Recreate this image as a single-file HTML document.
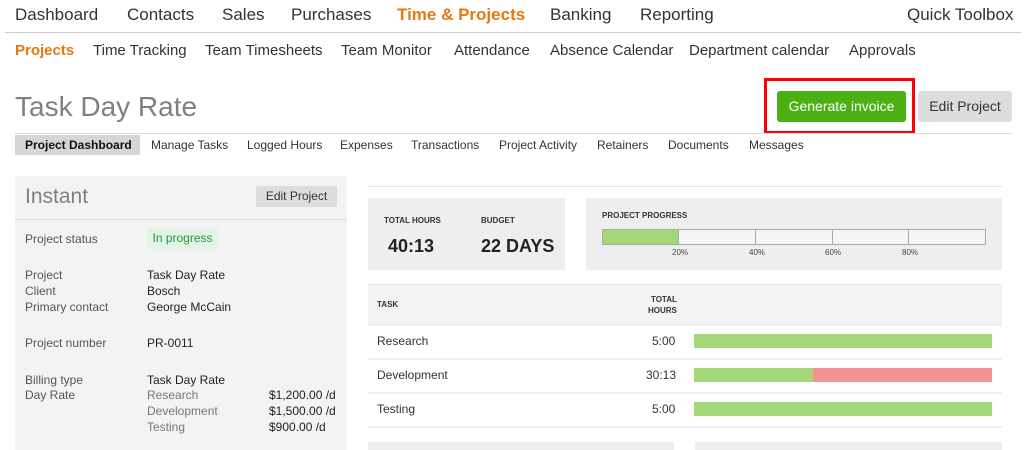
<!DOCTYPE html>
<html><head><meta charset="utf-8"><style>
*{margin:0;padding:0;box-sizing:border-box}
body{width:1024px;height:450px;overflow:hidden;background:#fff;font-family:"Liberation Sans",sans-serif;color:#333;position:relative}
.a{position:absolute;white-space:nowrap}
.n{font-size:17px;top:5px;color:#333}
.s{font-size:15px;top:42px;color:#333}
.t{font-size:12px;top:138px;color:#333}
.l{font-size:12px;color:#555;left:25px}
.v{font-size:12px;color:#222;left:147px}
.g{color:#777}
.cap{font-size:8px;font-weight:bold;color:#333}
.row{position:absolute;left:368px;width:634px;border-bottom:2px solid #eee}
.bar{position:absolute;left:694px;width:298px;height:14px;background:#a3d77a}
</style></head><body>
<div class="a n" style="left:15px">Dashboard</div>
<div class="a n" style="left:127px">Contacts</div>
<div class="a n" style="left:222px">Sales</div>
<div class="a n" style="left:291px">Purchases</div>
<div class="a n" style="left:397px;color:#e8770e;font-weight:bold">Time &amp; Projects</div>
<div class="a n" style="left:550px">Banking</div>
<div class="a n" style="left:640px">Reporting</div>
<div class="a n" style="left:907px">Quick Toolbox</div>
<div class="a" style="left:5px;top:32px;width:1016px;height:1px;background:#ccc"></div>
<div class="a s" style="left:15px;color:#e8770e;font-weight:bold">Projects</div>
<div class="a s" style="left:93px">Time Tracking</div>
<div class="a s" style="left:205px">Team Timesheets</div>
<div class="a s" style="left:341px">Team Monitor</div>
<div class="a s" style="left:454px">Attendance</div>
<div class="a s" style="left:550px">Absence Calendar</div>
<div class="a s" style="left:689px">Department calendar</div>
<div class="a s" style="left:849px">Approvals</div>
<div class="a" style="left:15px;top:91px;font-size:28px;color:#808080">Task Day Rate</div>
<div class="a" style="left:764px;top:78px;width:151px;height:56px;border:3px solid #f00"></div>
<div class="a" style="left:777px;top:91px;width:129px;height:31px;background:#4caf12;border-radius:3px;color:#fff;font-size:14px;text-align:center;line-height:31px">Generate invoice</div>
<div class="a" style="left:918px;top:91px;width:94px;height:31px;background:#ddd;border-radius:3px;color:#333;font-size:14px;text-align:center;line-height:31px">Edit Project</div>
<div class="a" style="left:15px;top:133px;width:997px;height:1px;background:#ddd"></div>
<div class="a" style="left:15px;top:135px;width:125px;height:20px;background:#d6d6d6"></div>
<div class="a t" style="left:25px;font-weight:bold;color:#111">Project Dashboard</div>
<div class="a t" style="left:151px">Manage Tasks</div>
<div class="a t" style="left:247px">Logged Hours</div>
<div class="a t" style="left:340px">Expenses</div>
<div class="a t" style="left:411px">Transactions</div>
<div class="a t" style="left:499px">Project Activity</div>
<div class="a t" style="left:597px">Retainers</div>
<div class="a t" style="left:668px">Documents</div>
<div class="a t" style="left:749px">Messages</div>
<div class="a" style="left:15px;top:176px;width:332px;height:274px;background:#f3f3f3"></div>
<div class="a" style="left:15px;top:219px;width:332px;height:1px;background:#ddd"></div>
<div class="a" style="left:25px;top:185px;font-size:21px;color:#808080">Instant</div>
<div class="a" style="left:256px;top:186px;width:81px;height:21px;background:#ddd;border-radius:2px;font-size:12px;text-align:center;line-height:21px;color:#333">Edit Project</div>
<div class="a l" style="top:232px">Project status</div>
<div class="a" style="left:147px;top:228px;width:71px;height:21px;background:#e3f4e6;border-radius:2px;font-size:12px;color:#1e9a3e;text-align:center;line-height:21px">In progress</div>
<div class="a l" style="top:268px">Project</div><div class="a v" style="top:268px">Task Day Rate</div>
<div class="a l" style="top:284px">Client</div><div class="a v" style="top:284px">Bosch</div>
<div class="a l" style="top:300px">Primary contact</div><div class="a v" style="top:300px">George McCain</div>
<div class="a l" style="top:336px">Project number</div><div class="a v" style="top:336px">PR-0011</div>
<div class="a l" style="top:373px">Billing type</div><div class="a v" style="top:373px">Task Day Rate</div>
<div class="a l" style="top:388px">Day Rate</div>
<div class="a v g" style="top:388px">Research</div><div class="a v" style="top:388px;left:269px">$1,200.00 /d</div>
<div class="a v g" style="top:404px">Development</div><div class="a v" style="top:404px;left:269px">$1,500.00 /d</div>
<div class="a v g" style="top:420px">Testing</div><div class="a v" style="top:420px;left:269px">$900.00 /d</div>
<div class="a" style="left:368px;top:186px;width:634px;height:1px;background:#e3e3e3"></div>
<div class="a" style="left:368px;top:198px;width:197px;height:72px;background:#eee"></div>
<div class="a cap" style="left:384px;top:216px">TOTAL HOURS</div>
<div class="a cap" style="left:481px;top:216px">BUDGET</div>
<div class="a" style="left:388px;top:236px;font-size:18px;font-weight:bold;color:#222">40:13</div>
<div class="a" style="left:481px;top:236px;font-size:18px;font-weight:bold;color:#222">22 DAYS</div>
<div class="a" style="left:586px;top:198px;width:416px;height:72px;background:#eee"></div>
<div class="a cap" style="left:602px;top:211px">PROJECT PROGRESS</div>
<div class="a" style="left:602px;top:229px;width:384px;height:16px;border:1px solid #aaa;background:#f4f4f4"></div>
<div class="a" style="left:603px;top:230px;width:76px;height:14px;background:#a3d77a;border-right:1px solid #aaa"></div>
<div class="a" style="left:755px;top:230px;width:1px;height:14px;background:#aaa"></div>
<div class="a" style="left:832px;top:230px;width:1px;height:14px;background:#aaa"></div>
<div class="a" style="left:908px;top:230px;width:1px;height:14px;background:#aaa"></div>
<div class="a" style="left:672px;top:248px;font-size:8px;color:#444">20%</div>
<div class="a" style="left:749px;top:248px;font-size:8px;color:#444">40%</div>
<div class="a" style="left:825px;top:248px;font-size:8px;color:#444">60%</div>
<div class="a" style="left:902px;top:248px;font-size:8px;color:#444">80%</div>
<div class="row" style="top:284px;height:42px;background:#f3f3f3;border-top:1px solid #e3e3e3"></div>
<div class="a cap" style="left:377px;top:300px">TASK</div>
<div class="a cap" style="left:648px;top:294px;text-align:right;line-height:11px">TOTAL<br>HOURS</div>
<div class="row" style="top:326px;height:34px"></div>
<div class="row" style="top:360px;height:34px"></div>
<div class="row" style="top:394px;height:34px"></div>
<div class="a" style="left:377px;top:334px;font-size:12px">Research</div><div class="a" style="left:652px;top:334px;font-size:12px">5:00</div>
<div class="bar" style="top:334px"></div>
<div class="a" style="left:377px;top:368px;font-size:12px">Development</div><div class="a" style="left:646px;top:368px;font-size:12px">30:13</div>
<div class="bar" style="top:368px;background:linear-gradient(90deg,#a3d77a 0 40%,#f59393 40%)"></div>
<div class="a" style="left:377px;top:402px;font-size:12px">Testing</div><div class="a" style="left:652px;top:402px;font-size:12px">5:00</div>
<div class="bar" style="top:402px"></div>
<div class="a" style="left:368px;top:442px;width:306px;height:8px;background:#eee"></div>
<div class="a" style="left:695px;top:442px;width:307px;height:8px;background:#eee"></div>
</body></html>
